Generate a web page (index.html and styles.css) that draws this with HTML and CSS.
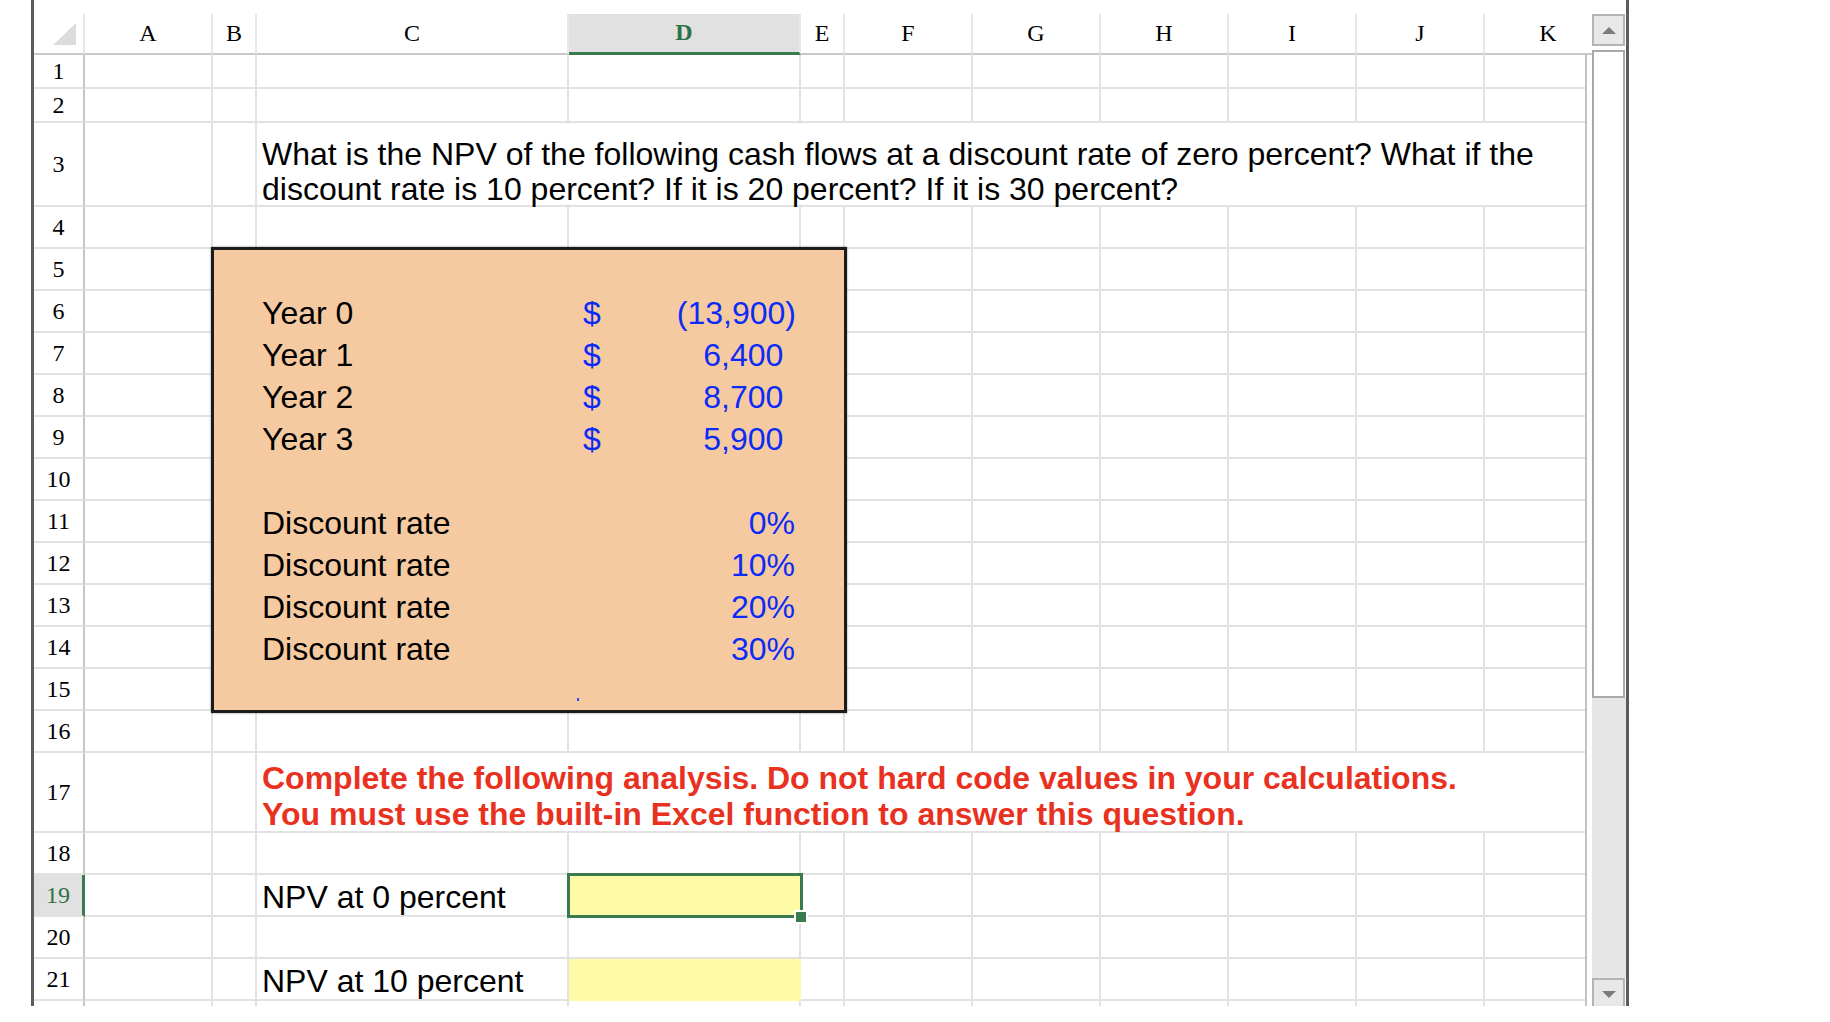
FILE: index.html
```html
<!DOCTYPE html>
<html lang="en">
<head>
<meta charset="utf-8">
<title>NPV worksheet</title>
<link rel="stylesheet" href="styles.css">
</head>
<body>
<div class="frame">
  <div class="sheet">
    <div class="colhead">
      <div class="corner"><span class="tri"></span></div>
      <div class="ch">A</div>
      <div class="ch">B</div>
      <div class="ch">C</div>
      <div class="ch sel">D</div>
      <div class="ch">E</div>
      <div class="ch">F</div>
      <div class="ch">G</div>
      <div class="ch">H</div>
      <div class="ch">I</div>
      <div class="ch">J</div>
      <div class="ch">K</div>
    </div>
    <div class="body">
      <!-- row 1 -->
      <div class="rh">1</div><div class="c"></div><div class="c"></div><div class="c"></div><div class="c"></div><div class="c"></div><div class="c"></div><div class="c"></div><div class="c"></div><div class="c"></div><div class="c"></div><div class="c"></div>
      <!-- row 2 -->
      <div class="rh">2</div><div class="c"></div><div class="c"></div><div class="c"></div><div class="c"></div><div class="c"></div><div class="c"></div><div class="c"></div><div class="c"></div><div class="c"></div><div class="c"></div><div class="c"></div>
      <!-- row 3 -->
      <div class="rh">3</div><div class="c"></div><div class="c"></div>
      <div class="c t merged r3"><p class="wrap">What is the NPV of the following cash flows at a discount rate of zero percent? What if the<br>discount rate is 10 percent? If it is 20 percent? If it is 30 percent?</p></div>
      <!-- row 4 -->
      <div class="rh">4</div><div class="c"></div><div class="c"></div><div class="c"></div><div class="c"></div><div class="c"></div><div class="c"></div><div class="c"></div><div class="c"></div><div class="c"></div><div class="c"></div><div class="c"></div>
      <!-- rows 5-15 (B:E covered by the data box) -->
      <div class="rh">5</div><div class="c"></div><div class="c"></div><div class="c"></div><div class="c"></div><div class="c"></div><div class="c"></div><div class="c"></div>
      <div class="rh">6</div><div class="c"></div><div class="c"></div><div class="c"></div><div class="c"></div><div class="c"></div><div class="c"></div><div class="c"></div>
      <div class="rh">7</div><div class="c"></div><div class="c"></div><div class="c"></div><div class="c"></div><div class="c"></div><div class="c"></div><div class="c"></div>
      <div class="rh">8</div><div class="c"></div><div class="c"></div><div class="c"></div><div class="c"></div><div class="c"></div><div class="c"></div><div class="c"></div>
      <div class="rh">9</div><div class="c"></div><div class="c"></div><div class="c"></div><div class="c"></div><div class="c"></div><div class="c"></div><div class="c"></div>
      <div class="rh">10</div><div class="c"></div><div class="c"></div><div class="c"></div><div class="c"></div><div class="c"></div><div class="c"></div><div class="c"></div>
      <div class="rh">11</div><div class="c"></div><div class="c"></div><div class="c"></div><div class="c"></div><div class="c"></div><div class="c"></div><div class="c"></div>
      <div class="rh">12</div><div class="c"></div><div class="c"></div><div class="c"></div><div class="c"></div><div class="c"></div><div class="c"></div><div class="c"></div>
      <div class="rh">13</div><div class="c"></div><div class="c"></div><div class="c"></div><div class="c"></div><div class="c"></div><div class="c"></div><div class="c"></div>
      <div class="rh">14</div><div class="c"></div><div class="c"></div><div class="c"></div><div class="c"></div><div class="c"></div><div class="c"></div><div class="c"></div>
      <div class="rh">15</div><div class="c"></div><div class="c"></div><div class="c"></div><div class="c"></div><div class="c"></div><div class="c"></div><div class="c"></div>
      <!-- row 16 -->
      <div class="rh">16</div><div class="c"></div><div class="c"></div><div class="c"></div><div class="c"></div><div class="c"></div><div class="c"></div><div class="c"></div><div class="c"></div><div class="c"></div><div class="c"></div><div class="c"></div>
      <!-- row 17 -->
      <div class="rh">17</div><div class="c"></div><div class="c"></div>
      <div class="c t merged r17 red"><p class="wrap">Complete the following analysis. Do not hard code values in your calculations.<br>You must use the built-in Excel function to answer this question.</p></div>
      <!-- row 18 -->
      <div class="rh">18</div><div class="c"></div><div class="c"></div><div class="c"></div><div class="c"></div><div class="c"></div><div class="c"></div><div class="c"></div><div class="c"></div><div class="c"></div><div class="c"></div><div class="c"></div>
      <!-- row 19 -->
      <div class="rh sel">19</div><div class="c"></div><div class="c"></div>
      <div class="c t">NPV at 0 percent</div>
      <div class="c yel active"><span class="selbox"></span><span class="handle"></span></div>
      <div class="c"></div><div class="c"></div><div class="c"></div><div class="c"></div><div class="c"></div><div class="c"></div><div class="c"></div>
      <!-- row 20 -->
      <div class="rh">20</div><div class="c"></div><div class="c"></div><div class="c"></div><div class="c"></div><div class="c"></div><div class="c"></div><div class="c"></div><div class="c"></div><div class="c"></div><div class="c"></div><div class="c"></div>
      <!-- row 21 -->
      <div class="rh">21</div><div class="c"></div><div class="c"></div>
      <div class="c t">NPV at 10 percent</div>
      <div class="c yel"></div>
      <div class="c"></div><div class="c"></div><div class="c"></div><div class="c"></div><div class="c"></div><div class="c"></div><div class="c"></div>
      <!-- row 22 (only its top edge is visible) -->
      <div class="rh"></div><div class="c"></div><div class="c"></div><div class="c"></div><div class="c"></div><div class="c"></div><div class="c"></div><div class="c"></div><div class="c"></div><div class="c"></div><div class="c"></div><div class="c"></div>

      <!-- data box B5:E15 -->
      <div class="box">
        <div class="brow first"></div>
        <div class="brow"><span class="lbl">Year 0</span><span class="amt"><span>$</span><span>(13,900)</span></span></div>
        <div class="brow"><span class="lbl">Year 1</span><span class="amt"><span>$</span><span>6,400<span class="pad">)</span></span></span></div>
        <div class="brow"><span class="lbl">Year 2</span><span class="amt"><span>$</span><span>8,700<span class="pad">)</span></span></span></div>
        <div class="brow"><span class="lbl">Year 3</span><span class="amt"><span>$</span><span>5,900<span class="pad">)</span></span></span></div>
        <div class="brow"></div>
        <div class="brow"><span class="lbl">Discount rate</span><span class="pct">0%</span></div>
        <div class="brow"><span class="lbl">Discount rate</span><span class="pct">10%</span></div>
        <div class="brow"><span class="lbl">Discount rate</span><span class="pct">20%</span></div>
        <div class="brow"><span class="lbl">Discount rate</span><span class="pct">30%</span></div>
        <div class="brow last"><span class="dot"></span></div>
      </div>
    </div>
  </div>
  <div class="vscroll">
    <div class="sbtn"><span class="arrow-up"></span></div>
    <div class="thumb"></div>
    <div class="track"></div>
    <div class="sbtn"><span class="arrow-down"></span></div>
  </div>
</div>
</body>
</html>
```

FILE: styles.css
```css
html, body {
  margin: 0;
  padding: 0;
  background: #ffffff;
}

.frame {
  display: flex;
  margin-left: 31px;
  width: 1598px;
  height: 1006px;
  box-sizing: border-box;
  border-left: 3px solid #5c5c5c;
  border-right: 3px solid #5c5c5c;
  padding-top: 14px;
  overflow: hidden;
  background: #ffffff;
}

.sheet {
  width: 1558px;
  flex: none;
  display: flex;
  flex-direction: column;
  overflow: hidden;
}

/* ---------- column header ---------- */
.colhead {
  display: grid;
  grid-template-columns: 51px 128px 44px 312px 232px 44px 128px 128px 128px 128px 128px 128px;
  height: 41px;
  flex: none;
}

.corner {
  box-sizing: border-box;
  border-right: 2px solid #e6e6e6;
  border-bottom: 2px solid #c9c9c9;
  display: flex;
  justify-content: flex-end;
  align-items: flex-end;
  padding: 0 7px 8px 0;
}

.tri {
  width: 0;
  height: 0;
  border-left: 23px solid transparent;
  border-bottom: 22px solid #dcdcdc;
}

.ch {
  box-sizing: border-box;
  border-right: 2px solid #e8e8e8;
  border-bottom: 2px solid #c9c9c9;
  display: flex;
  align-items: center;
  justify-content: center;
  padding-bottom: 1px;
  font-family: "Liberation Serif", "Times New Roman", serif;
  font-size: 24px;
  color: #000;
}

.ch.sel {
  background: #e1e1e1;
  color: #2f7245;
  font-weight: bold;
  border-bottom: 3px solid #3b7a4f;
}

/* ---------- body grid ---------- */
.body {
  display: grid;
  grid-template-columns: 51px 128px 44px 312px 232px 44px 128px 128px 128px 128px 128px 128px;
  grid-template-rows: 34px 34px 84px repeat(13, 42px) 80px repeat(5, 42px);
  width: 1553px;
  flex: 1;
  box-sizing: border-box;
  border-right: 2px solid #c2c2c2;
  overflow: hidden;
}

.rh {
  box-sizing: border-box;
  border-right: 2px solid #c6c6c6;
  border-bottom: 2px solid #e2e2e2;
  display: flex;
  align-items: center;
  justify-content: center;
  font-family: "Liberation Serif", "Times New Roman", serif;
  font-size: 24px;
  color: #000;
}

.rh.sel {
  background: #e1e1e1;
  color: #2f7245;
  border-right: 3px solid #3b7a4f;
}

.c {
  box-sizing: border-box;
  border-right: 2px solid #e2e2e2;
  border-bottom: 2px solid #e2e2e2;
  min-width: 0;
}

.t {
  display: flex;
  align-items: flex-end;
  padding: 0 0 0 5px;
  font-family: "Liberation Sans", Arial, sans-serif;
  font-size: 32px;
  line-height: 36px;
  color: #000;
  white-space: nowrap;
}

.merged {
  grid-column: 4 / 13;
  border-right: none;
}

.r3 { grid-row: 3; }
.r17 { grid-row: 17; }

.wrap {
  margin: 0 0 -2px 0;
  line-height: 35px;
}

.r17 .wrap {
  margin-bottom: -1px;
  line-height: 36px;
}

.red {
  color: #e8321f;
  font-weight: bold;
}

.yel {
  background: #fffaa6;
  border-color: transparent;
}

.active {
  position: relative;
}

.selbox {
  position: absolute;
  left: -2px;
  top: -2px;
  right: -4px;
  bottom: -3px;
  border: 3px solid #3b7a4f;
}

.handle {
  position: absolute;
  right: -9px;
  bottom: -9px;
  width: 10px;
  height: 10px;
  background: #3b7a4f;
  border: 2px solid #ffffff;
}

/* ---------- data box ---------- */
.box {
  grid-column: 3 / 7;
  grid-row: 5 / 16;
  margin: -2px -2px -2px -2px;
  border: 3px solid #1c1c1c;
  box-shadow: 0 0 2px rgba(0, 0, 0, 0.45);
  background: #f6caa0;
  display: flex;
  flex-direction: column;
  font-family: "Liberation Sans", Arial, sans-serif;
  font-size: 32px;
  line-height: 36px;
  color: #000;
}

.brow {
  display: grid;
  grid-template-columns: 43px 312px 232px;
  height: 42px;
  flex: none;
  align-items: end;
  padding-bottom: 2px;
  box-sizing: border-box;
}

.brow.first { height: 41px; }
.brow.last { flex: 1; }

.lbl {
  grid-column: 2;
  padding-left: 5px;
  white-space: nowrap;
}

.amt {
  grid-column: 3;
  display: flex;
  justify-content: space-between;
  padding: 0 5px 0 14px;
  color: #0b2cf6;
  white-space: nowrap;
}

.pad {
  visibility: hidden;
  padding-right: 2px;
}

.pct {
  grid-column: 3;
  text-align: right;
  padding-right: 6px;
  color: #0b2cf6;
}

.dot {
  grid-column: 3;
  width: 2px;
  height: 3px;
  margin: 0 0 7px 8px;
  background: #2a4cff;
}

/* ---------- vertical scrollbar ---------- */
.vscroll {
  width: 34px;
  flex: none;
  display: flex;
  flex-direction: column;
  overflow: hidden;
}

.sbtn {
  height: 32px;
  flex: none;
  box-sizing: border-box;
  border: 2px solid #b4b4b4;
  background: #e8e8e8;
  display: flex;
  align-items: center;
  justify-content: center;
  margin-right: 1px;
}

.arrow-up {
  width: 0;
  height: 0;
  border-left: 7px solid transparent;
  border-right: 7px solid transparent;
  border-bottom: 7px solid #7b7b7b;
}

.arrow-down {
  width: 0;
  height: 0;
  border-left: 7px solid transparent;
  border-right: 7px solid transparent;
  border-top: 7px solid #7b7b7b;
}

.thumb {
  height: 648px;
  flex: none;
  margin-top: 4px;
  margin-right: 1px;
  box-sizing: border-box;
  border: 2px solid #a9a9a9;
  background: #ffffff;
}

.track {
  height: 280px;
  flex: none;
  background: #e6e6e6;
}
```
